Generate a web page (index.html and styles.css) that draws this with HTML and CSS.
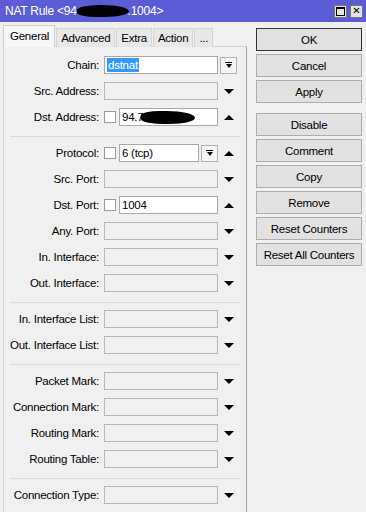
FILE: index.html
```html
<!DOCTYPE html>
<html>
<head>
<meta charset="utf-8">
<link rel="stylesheet" href="styles.css">
</head>
<body>
<div class="window">
  <div class="titlebar">
    <span class="title">NAT Rule &lt;94<span class="blot blot-title"></span>.1004&gt;</span>
    <span class="tb-btns">
      <span class="tb-btn"><span class="max-glyph"></span></span>
      <span class="tb-btn tb-close">&#x2715;</span>
    </span>
  </div>
  <div class="main">
    <div class="left">
      <div class="tabs">
        <div class="tab active">General</div>
        <div class="tab">Advanced</div>
        <div class="tab">Extra</div>
        <div class="tab">Action</div>
        <div class="tab">...</div>
      </div>
      <div class="panel">
        <div class="row">
          <div class="label">Chain:</div>
          <div class="field"><div class="input on"><span class="sel">dstnat</span></div></div>
          <div class="arrowcol"><div class="ddbtn"><span class="dd-bar"></span><span class="tri-down small"></span></div></div>
        </div>
        <div class="row">
          <div class="label">Src. Address:</div>
          <div class="field"><div class="input"></div></div>
          <div class="arrowcol"><span class="tri-down"></span></div>
        </div>
        <div class="row">
          <div class="label">Dst. Address:</div>
          <div class="field"><span class="check"></span><div class="input on">94.7<span class="blot blot-addr"></span></div></div>
          <div class="arrowcol"><span class="tri-up"></span></div>
        </div>
        <div class="sep"></div>
        <div class="row">
          <div class="label">Protocol:</div>
          <div class="field"><span class="check"></span><div class="input on">6 (tcp)</div><div class="ddbtn"><span class="dd-bar"></span><span class="tri-down small"></span></div></div>
          <div class="arrowcol"><span class="tri-up"></span></div>
        </div>
        <div class="row">
          <div class="label">Src. Port:</div>
          <div class="field"><div class="input"></div></div>
          <div class="arrowcol"><span class="tri-down"></span></div>
        </div>
        <div class="row">
          <div class="label">Dst. Port:</div>
          <div class="field"><span class="check"></span><div class="input on">1004</div></div>
          <div class="arrowcol"><span class="tri-up"></span></div>
        </div>
        <div class="row">
          <div class="label">Any. Port:</div>
          <div class="field"><div class="input"></div></div>
          <div class="arrowcol"><span class="tri-down"></span></div>
        </div>
        <div class="row">
          <div class="label">In. Interface:</div>
          <div class="field"><div class="input"></div></div>
          <div class="arrowcol"><span class="tri-down"></span></div>
        </div>
        <div class="row">
          <div class="label">Out. Interface:</div>
          <div class="field"><div class="input"></div></div>
          <div class="arrowcol"><span class="tri-down"></span></div>
        </div>
        <div class="sep"></div>
        <div class="row">
          <div class="label">In. Interface List:</div>
          <div class="field"><div class="input"></div></div>
          <div class="arrowcol"><span class="tri-down"></span></div>
        </div>
        <div class="row">
          <div class="label">Out. Interface List:</div>
          <div class="field"><div class="input"></div></div>
          <div class="arrowcol"><span class="tri-down"></span></div>
        </div>
        <div class="sep"></div>
        <div class="row">
          <div class="label">Packet Mark:</div>
          <div class="field"><div class="input"></div></div>
          <div class="arrowcol"><span class="tri-down"></span></div>
        </div>
        <div class="row">
          <div class="label">Connection Mark:</div>
          <div class="field"><div class="input"></div></div>
          <div class="arrowcol"><span class="tri-down"></span></div>
        </div>
        <div class="row">
          <div class="label">Routing Mark:</div>
          <div class="field"><div class="input"></div></div>
          <div class="arrowcol"><span class="tri-down"></span></div>
        </div>
        <div class="row">
          <div class="label">Routing Table:</div>
          <div class="field"><div class="input"></div></div>
          <div class="arrowcol"><span class="tri-down"></span></div>
        </div>
        <div class="sep"></div>
        <div class="row">
          <div class="label">Connection Type:</div>
          <div class="field"><div class="input"></div></div>
          <div class="arrowcol"><span class="tri-down"></span></div>
        </div>
      </div>
    </div>
    <div class="right">
      <div class="btn default">OK</div>
      <div class="btn">Cancel</div>
      <div class="btn">Apply</div>
      <div class="btn gap">Disable</div>
      <div class="btn">Comment</div>
      <div class="btn">Copy</div>
      <div class="btn">Remove</div>
      <div class="btn">Reset Counters</div>
      <div class="btn">Reset All Counters</div>
    </div>
  </div>
</div>
</body>
</html>
```
FILE: styles.css
```css
* { box-sizing: border-box; }
html, body { margin: 0; padding: 0; }
body {
  width: 366px;
  height: 512px;
  overflow: hidden;
  background: #f0f0f0;
  font-family: "Liberation Sans", Arial, sans-serif;
  font-size: 11.5px;
  letter-spacing: -0.25px;
  color: #000;
}
.window { width: 366px; height: 512px; display: flex; flex-direction: column; }
.titlebar {
  height: 22px;
  background: #5c5cd6;
  color: #fff;
  display: flex;
  align-items: center;
  justify-content: space-between;
  padding: 0 3px 0 5px;
  flex-shrink: 0;
}
.title { font-size: 12px; white-space: nowrap; display: flex; align-items: center; }
.blot {
  display: inline-block;
  background: #000;
  border-radius: 50%;
}
.blot-title { width: 52px; height: 12px; margin: 0 -1px 0 0; border-radius: 45% 55% 50% 40%; }
.blot-addr { width: 54px; height: 13px; margin-left: -2px; vertical-align: middle; border-radius: 40% 60% 55% 45%; }
.tb-btns { display: flex; gap: 3px; }
.tb-btn {
  width: 13px; height: 13px;
  background: #e4e4e4;
  border: 1px solid #777;
  display: flex; align-items: center; justify-content: center;
  font-size: 10px; font-weight: bold; color: #000; line-height: 1;
  letter-spacing: 0;
  font-family: "DejaVu Sans", sans-serif;
}
.max-glyph { width: 9px; height: 9px; border: 1px solid #000; border-top-width: 2px; }
.main { display: flex; flex: 1; }
.left { width: 247px; display: flex; flex-direction: column; padding-left: 3px; }
.tabs { display: flex; align-items: flex-end; height: 25px; margin-bottom: -1px; }
.tab {
  height: 19px;
  padding: 0 4px;
  margin-right: 1px;
  background: #e8e8e8;
  border: 1px solid #d6d6d6;
  border-bottom: none;
  display: flex; align-items: center;
  position: relative;
}
.tab.active {
  height: 22px;
  background: #f7f7f7;
  border-color: #cfcfcf;
  padding: 0 5px 2px 6px;
  margin-right: 1px;
  z-index: 1;
}
.panel {
  flex: 1;
  border: 1px solid #d6d6d6;
  border-right-color: #a0a0a0;
  border-bottom: none;
  padding-top: 9px;
}
.row { display: flex; height: 18px; margin-bottom: 8px; align-items: center; }
.label { width: 95px; text-align: right; white-space: nowrap; }
.field { width: 114px; margin-left: 5px; display: flex; height: 18px; align-items: center; }
.input {
  flex: 1;
  height: 18px;
  border: 1px solid #b7b7b7;
  background: #f0f0f0;
  padding-left: 2px;
  display: flex; align-items: center;
  white-space: nowrap;
  overflow: hidden;
}
.input.on { background: #fff; border-color: #a8a8a8; }
.sel { background: #3399ff; color: #fff; padding: 0 1px; height: 14px; display: flex; align-items: center; }
.check {
  width: 12px; height: 12px;
  border: 1px solid #9a9a9a;
  background: #fff;
  margin-right: 3px;
  flex-shrink: 0;
}
.arrowcol { width: 17px; margin-left: 2px; display: flex; align-items: center; justify-content: center; height: 18px; }
.ddbtn {
  width: 17px; height: 17px;
  border: 1px solid #b0b0b0;
  background: #f4f4f4;
  display: flex; flex-direction: column; align-items: center; justify-content: center;
  gap: 1px;
  flex-shrink: 0;
}
.field .ddbtn { margin-left: 2px; }
.dd-bar { width: 7px; height: 1px; background: #000; }
.tri-down {
  width: 0; height: 0;
  border-left: 5px solid transparent;
  border-right: 5px solid transparent;
  border-top: 5px solid #000;
}
.tri-down.small { border-left-width: 3.5px; border-right-width: 3.5px; border-top-width: 4px; }
.tri-up {
  width: 0; height: 0;
  border-left: 5px solid transparent;
  border-right: 5px solid transparent;
  border-bottom: 5px solid #000;
}
.sep { height: 1px; background: #dadada; margin: 10px 6px 7px 6px; }
.right { margin-left: 9px; padding-top: 6px; display: flex; flex-direction: column; gap: 3px; }
.btn {
  width: 106px; height: 23px;
  border: 1px solid #adadad;
  background: #e1e1e1;
  display: flex; align-items: center; justify-content: center;
  white-space: nowrap;
}
.btn.default { border-color: #333; }
.btn.gap { margin-top: 7px; }
```
